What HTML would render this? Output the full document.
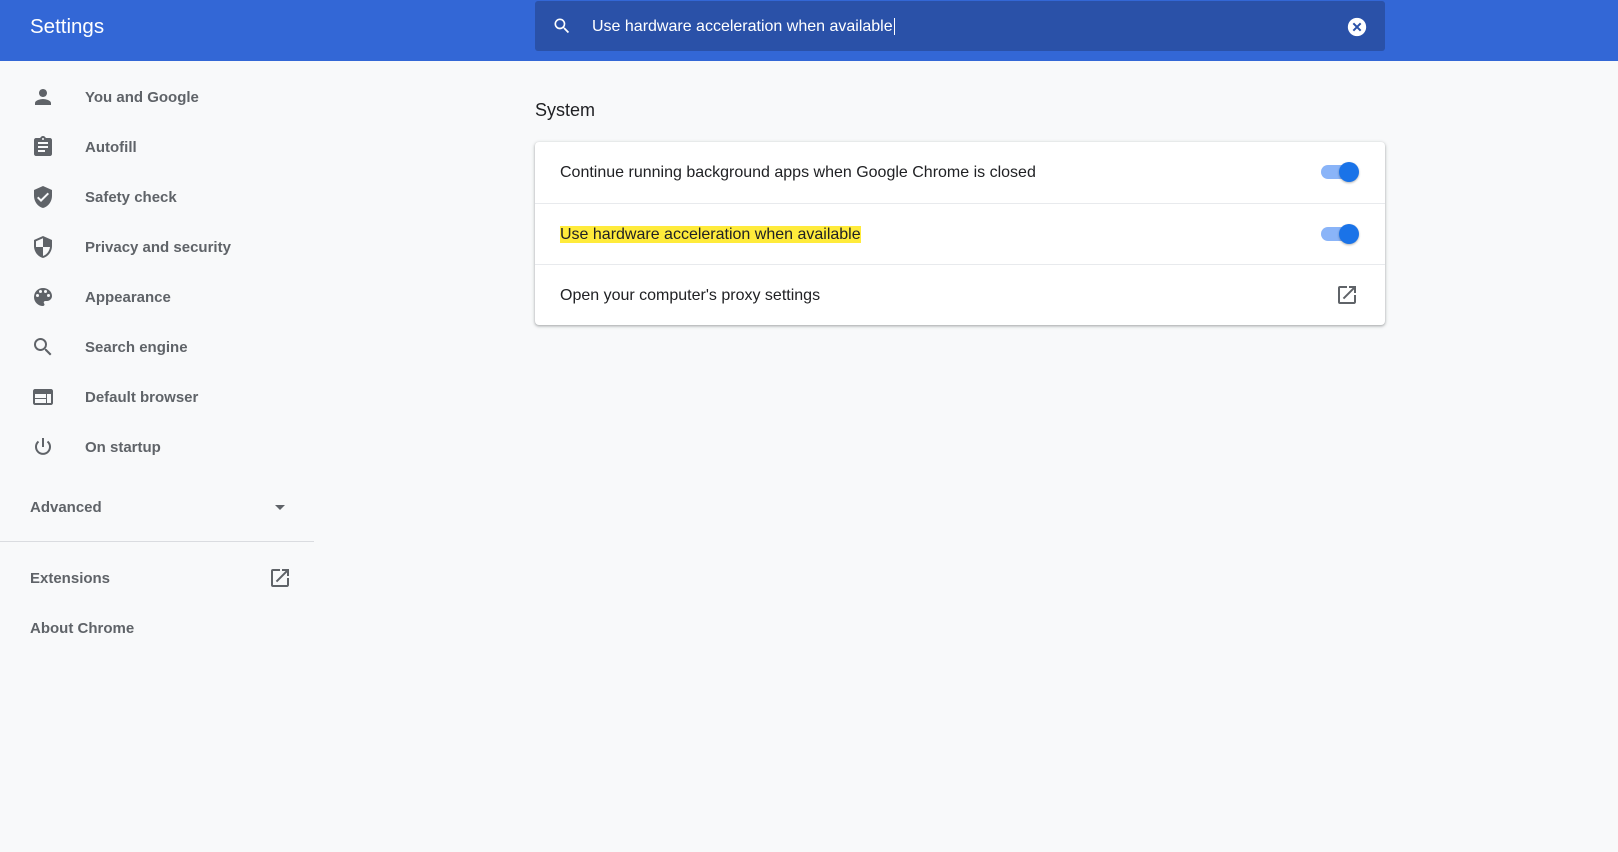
<!DOCTYPE html>
<html><head><meta charset="utf-8"><style>
*{margin:0;padding:0;box-sizing:border-box}
body{width:1618px;height:852px;background:#f8f9fa;font-family:"Liberation Sans",sans-serif;position:relative;overflow:hidden;color:#202124}
.hdr{position:absolute;left:0;top:0;width:1618px;height:61px;background:#3367d6}
.title{position:absolute;left:30px;top:15px;font-size:20.5px;color:#fff}
.search{position:absolute;left:535px;top:1px;width:850px;height:50px;background:#2a51a8;border-radius:3px}
.search .q{position:absolute;left:57px;top:17px;font-size:16px;color:#fff}
.nav{position:absolute;left:0;font-size:15px;color:#5f6368;font-weight:bold}
.nav svg{position:absolute;left:31px;top:-4px}
.nav span{position:absolute;left:85px;top:0;white-space:nowrap;color:#5f6368}
.sep{position:absolute;left:0;top:541px;width:314px;height:1px;background:#dadce0}
h2{position:absolute;left:535px;top:100px;font-size:18px;font-weight:normal;color:#202124}
.card{position:absolute;left:535px;top:142px;width:850px;height:183px;background:#fff;border-radius:4px;box-shadow:0 1px 2px rgba(60,64,67,.3),0 1px 3px 1px rgba(60,64,67,.15)}
.row{position:absolute;left:0;width:850px;height:61px;font-size:16px}
.row+.row{border-top:1px solid #e8eaed}
.row .t{position:absolute;left:25px;top:22px}
.tg{position:absolute;left:786px;top:23px;width:36px;height:14px;border-radius:7px;background:#8ab4f8}
.tg::after{content:"";position:absolute;left:18px;top:-3px;width:20px;height:20px;border-radius:50%;background:#1a73e8;box-shadow:0 1px 2px rgba(0,0,0,.3)}
mark{background:#ffeb3b;color:#202124}
</style></head><body>
<div class="hdr"><div class="title">Settings</div>
<div class="search">
<svg style="position:absolute;left:17px;top:15px" width="20" height="20" viewBox="0 0 24 24"><path fill="#fff" d="M15.5 14h-.79l-.28-.27A6.47 6.47 0 0 0 16 9.5 6.5 6.5 0 1 0 9.5 16c1.61 0 3.09-.59 4.23-1.57l.27.28v.79l5 4.99L20.49 19l-4.99-5zm-6 0C7.010 14 5 11.99 5 9.5S7.01 5 9.5 5 14 7.01 14 9.5 11.99 14 9.5 14z"/></svg>
<div class="q">Use hardware acceleration when available<span style="border-left:1px solid #fff;margin-left:1px"></span></div>
<svg style="position:absolute;left:811px;top:15px" width="22" height="22" viewBox="0 0 24 24"><circle cx="12" cy="12" r="10" fill="#fff"/><path d="M8 8l8 8M16 8l-8 8" stroke="#2a51a8" stroke-width="2.2"/></svg>
</div></div>

<div class="nav" style="top:89px"><svg width="24" height="24" viewBox="0 0 24 24"><path fill="#5f6368" d="M12 12c2.21 0 4-1.790 4-4s-1.79-4-4-4-4 1.79-4 4 1.79 4 4 4zm0 2c-2.67 0-8 1.34-8 4v2h16v-2c0-2.66-5.33-4-8-4z"/></svg><span>You and Google</span></div>
<div class="nav" style="top:139px"><svg width="24" height="24" viewBox="0 0 24 24"><path fill="#5f6368" d="M19 3h-4.18C14.4 1.84 13.3 1 12 1s-2.4.84-2.820 2H5c-1.1 0-2 .9-2 2v14c0 1.1.9 2 2 2h14c1.1 0 2-.9 2-2V5c0-1.1-.9-2-2-2zm-7 0c.55 0 1 .45 1 1s-.45 1-1 1-1-.45-1-1 .45-1 1-1zm2 14H7v-2h7v2zm3-4H7v-2h10v2zm0-4H7V7h10v2z"/></svg><span>Autofill</span></div>
<div class="nav" style="top:189px"><svg width="24" height="24" viewBox="0 0 24 24"><path fill="#5f6368" d="M12 1L3 5v6c0 5.55 3.84 10.74 9 12 5.16-1.26 9-6.45 9-12V5l-9-4zm-2 16l-4-4 1.41-1.41L10 14.17l6.59-6.59L18 9l-8 8z"/></svg><span>Safety check</span></div>
<div class="nav" style="top:239px"><svg width="24" height="24" viewBox="0 0 24 24"><path fill="#5f6368" d="M12 1L3 5v6c0 5.55 3.84 10.74 9 12 5.16-1.26 9-6.45 9-12V5l-9-4zm0 10.99h7c-.53 4.12-3.28 7.79-7 8.94V12H5V6.3l7-3.11v8.8z"/></svg><span>Privacy and security</span></div>
<div class="nav" style="top:289px"><svg width="24" height="24" viewBox="0 0 24 24"><path fill="#5f6368" d="M12 3a9 9 0 0 0 0 18c.83 0 1.5-.67 1.5-1.5 0-.39-.15-.74-.39-1.01-.23-.26-.38-.61-.38-.99 0-.83.67-1.5 1.5-1.5H16c2.76 0 5-2.24 5-5 0-4.420-4.03-8-9-8zm-5.5 9a1.5 1.5 0 1 1 0-3 1.5 1.5 0 0 1 0 3zm3-4a1.5 1.5 0 1 1 0-3 1.5 1.5 0 0 1 0 3zm5 0a1.5 1.5 0 1 1 0-3 1.5 1.5 0 0 1 0 3zm3 4a1.5 1.5 0 1 1 0-3 1.5 1.5 0 0 1 0 3z"/></svg><span>Appearance</span></div>
<div class="nav" style="top:339px"><svg width="24" height="24" viewBox="0 0 24 24"><path fill="#5f6368" d="M15.5 14h-.79l-.28-.27A6.47 6.47 0 0 0 16 9.5 6.5 6.5 0 1 0 9.5 16c1.61 0 3.09-.59 4.23-1.57l.27.28v.79l5 4.99L20.49 19l-4.99-5zm-6 0C7.01 14 5 11.99 5 9.5S7.01 5 9.5 5 14 7.01 14 9.5 11.99 14 9.5 14z"/></svg><span>Search engine</span></div>
<div class="nav" style="top:389px"><svg width="24" height="24" viewBox="0 0 24 24"><path fill="#5f6368" d="M20 4H4c-1.1 0-2 .9-2 2v12c0 1.1.9 2 2 2h16c1.1 0 2-.9 2-2V6c0-1.1-.9-2-2-2zm-5 14H4v-4h11v4zm0-5H4V9h11v4zm5 5h-4V9h4v9z"/></svg><span>Default browser</span></div>
<div class="nav" style="top:439px"><svg width="24" height="24" viewBox="0 0 24 24"><path fill="none" stroke="#5f6368" stroke-width="2" d="M12 3v9M7.5 6.5a7 7 0 1 0 9 0"/></svg><span>On startup</span></div>
<div class="nav" style="top:499px"><span style="left:30px">Advanced</span><svg style="left:273px;top:-2px" width="14" height="20" viewBox="0 0 14 20"><path fill="#5f6368" d="M2 8l5 5 5-5z"/></svg></div>
<div class="sep"></div>
<div class="nav" style="top:570px"><span style="left:30px">Extensions</span><svg style="left:268px;top:-4px" width="24" height="24" viewBox="0 0 24 24"><path fill="#5f6368" d="M19 19H5V5h7V3H5a2 2 0 0 0-2 2v14a2 2 0 0 0 2 2h14c1.1 0 2-.9 2-2v-7h-2v7zM14 3v2h3.59l-9.83 9.830 1.41 1.41L19 6.41V10h2V3h-7z"/></svg></div>
<div class="nav" style="top:620px"><span style="left:30px">About Chrome</span></div>

<h2>System</h2>
<div class="card">
<div class="row" style="top:0"><div class="t">Continue running background apps when Google Chrome is closed</div><div class="tg"></div></div>
<div class="row" style="top:61px"><div class="t"><mark>Use hardware acceleration when available</mark></div><div class="tg"></div></div>
<div class="row" style="top:122px"><div class="t">Open your computer's proxy settings</div>
<svg style="position:absolute;left:800px;top:18px" width="24" height="24" viewBox="0 0 24 24"><path fill="#5f6368" d="M19 19H5V5h7V3H5a2 2 0 0 0-2 2v14a2 2 0 0 0 2 2h14c1.1 0 2-.9 2-2v-7h-2v7zM14 3v2h3.59l-9.83 9.83 1.41 1.41L19 6.41V10h2V3h-7z"/></svg></div>
</div>
</body></html>
